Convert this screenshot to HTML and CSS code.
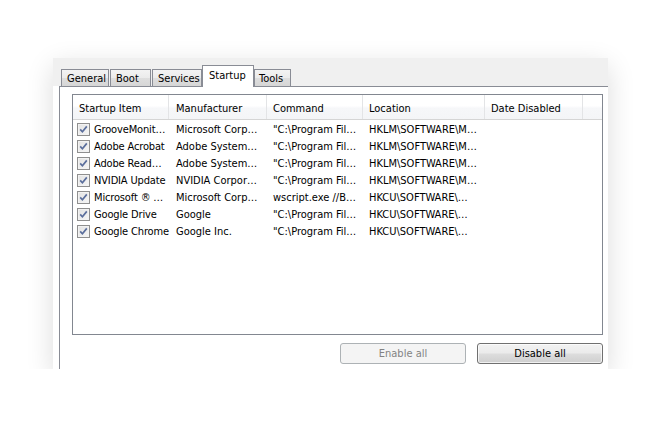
FILE: index.html
```html
<!DOCTYPE html>
<html>
<head>
<meta charset="utf-8">
<link rel="stylesheet" href="styles.css">
</head>
<body>
<div class="panel">
  <div class="tabs">
    <div class="tab t-general">General</div>
    <div class="tab t-boot">Boot</div>
    <div class="tab t-services">Services</div>
    <div class="tab t-startup active">Startup</div>
    <div class="tab t-tools">Tools</div>
  </div>
  <div class="page">
    <div class="list">
      <div class="head">
        <div class="hc">Startup Item</div>
        <div class="hc">Manufacturer</div>
        <div class="hc">Command</div>
        <div class="hc">Location</div>
        <div class="hc">Date Disabled</div>
        <div class="hc last"></div>
      </div>
      <div class="rows">
        <div class="row">
          <div class="c item"><svg class="cb" viewBox="0 0 13 13"><defs><linearGradient id="g1" x1="0" y1="0" x2="1" y2="1"><stop offset="0" stop-color="#e4e4e4"/><stop offset="1" stop-color="#f4f4f4"/></linearGradient></defs><rect x="0.5" y="0.5" width="12" height="12" fill="#f2f2f2" stroke="#8f8f8f"/><rect x="2" y="2" width="9" height="9" fill="url(#g1)"/><path d="M3.2 6.4 L5.4 8.8 L9.8 3.4" fill="none" stroke="#5a6e9c" stroke-width="1.7"/></svg><span>GrooveMonit…</span></div>
          <div class="c">Microsoft Corp…</div>
          <div class="c">"C:\Program Fil…</div>
          <div class="c">HKLM\SOFTWARE\M…</div>
          <div class="c"></div>
        </div>
        <div class="row">
          <div class="c item"><svg class="cb" viewBox="0 0 13 13"><rect x="0.5" y="0.5" width="12" height="12" fill="#f2f2f2" stroke="#8f8f8f"/><rect x="2" y="2" width="9" height="9" fill="url(#g1)"/><path d="M3.2 6.4 L5.4 8.8 L9.8 3.4" fill="none" stroke="#5a6e9c" stroke-width="1.7"/></svg><span>Adobe Acrobat</span></div>
          <div class="c">Adobe System…</div>
          <div class="c">"C:\Program Fil…</div>
          <div class="c">HKLM\SOFTWARE\M…</div>
          <div class="c"></div>
        </div>
        <div class="row">
          <div class="c item"><svg class="cb" viewBox="0 0 13 13"><rect x="0.5" y="0.5" width="12" height="12" fill="#f2f2f2" stroke="#8f8f8f"/><rect x="2" y="2" width="9" height="9" fill="url(#g1)"/><path d="M3.2 6.4 L5.4 8.8 L9.8 3.4" fill="none" stroke="#5a6e9c" stroke-width="1.7"/></svg><span>Adobe Read…</span></div>
          <div class="c">Adobe System…</div>
          <div class="c">"C:\Program Fil…</div>
          <div class="c">HKLM\SOFTWARE\M…</div>
          <div class="c"></div>
        </div>
        <div class="row">
          <div class="c item"><svg class="cb" viewBox="0 0 13 13"><rect x="0.5" y="0.5" width="12" height="12" fill="#f2f2f2" stroke="#8f8f8f"/><rect x="2" y="2" width="9" height="9" fill="url(#g1)"/><path d="M3.2 6.4 L5.4 8.8 L9.8 3.4" fill="none" stroke="#5a6e9c" stroke-width="1.7"/></svg><span>NVIDIA Update</span></div>
          <div class="c">NVIDIA Corpor…</div>
          <div class="c">"C:\Program Fil…</div>
          <div class="c">HKLM\SOFTWARE\M…</div>
          <div class="c"></div>
        </div>
        <div class="row">
          <div class="c item"><svg class="cb" viewBox="0 0 13 13"><rect x="0.5" y="0.5" width="12" height="12" fill="#f2f2f2" stroke="#8f8f8f"/><rect x="2" y="2" width="9" height="9" fill="url(#g1)"/><path d="M3.2 6.4 L5.4 8.8 L9.8 3.4" fill="none" stroke="#5a6e9c" stroke-width="1.7"/></svg><span>Microsoft ® …</span></div>
          <div class="c">Microsoft Corp…</div>
          <div class="c">wscript.exe //B…</div>
          <div class="c">HKCU\SOFTWARE\…</div>
          <div class="c"></div>
        </div>
        <div class="row">
          <div class="c item"><svg class="cb" viewBox="0 0 13 13"><rect x="0.5" y="0.5" width="12" height="12" fill="#f2f2f2" stroke="#8f8f8f"/><rect x="2" y="2" width="9" height="9" fill="url(#g1)"/><path d="M3.2 6.4 L5.4 8.8 L9.8 3.4" fill="none" stroke="#5a6e9c" stroke-width="1.7"/></svg><span>Google Drive</span></div>
          <div class="c">Google</div>
          <div class="c">"C:\Program Fil…</div>
          <div class="c">HKCU\SOFTWARE\…</div>
          <div class="c"></div>
        </div>
        <div class="row">
          <div class="c item"><svg class="cb" viewBox="0 0 13 13"><rect x="0.5" y="0.5" width="12" height="12" fill="#f2f2f2" stroke="#8f8f8f"/><rect x="2" y="2" width="9" height="9" fill="url(#g1)"/><path d="M3.2 6.4 L5.4 8.8 L9.8 3.4" fill="none" stroke="#5a6e9c" stroke-width="1.7"/></svg><span>Google Chrome</span></div>
          <div class="c">Google Inc.</div>
          <div class="c">"C:\Program Fil…</div>
          <div class="c">HKCU\SOFTWARE\…</div>
          <div class="c"></div>
        </div>
      </div>
    </div>
    <div class="buttons">
      <div class="btn disabled">Enable all</div>
      <div class="btn">Disable all</div>
    </div>
  </div>
</div>
</body>
</html>
```
FILE: styles.css
```css
html, body {
  margin: 0;
  padding: 0;
  background: #ffffff;
}
body {
  font-family: "DejaVu Sans Condensed", "DejaVu Sans", "Liberation Sans", sans-serif;
  font-stretch: condensed;
  font-size: 11px;
  color: #000;
  padding-top: 58px;
  padding-left: 53px;
}
.panel {
  width: 555px;
  height: 311px;
  background: #ffffff;
  box-shadow: 0 8px 26px rgba(0, 0, 0, 0.14);
  overflow: hidden;
  display: flex;
  flex-direction: column;
}
.tabs {
  background: #f0f0f0;
  padding: 7px 0 0 8px;
  height: 21px;
  display: flex;
  align-items: flex-end;
  gap: 1px;
}
.tab {
  box-sizing: border-box;
  height: 17px;
  border: 1px solid #898c95;
  border-bottom: none;
  background: linear-gradient(#f3f3f3 0%, #ebebeb 50%, #dedede 51%, #d6d6d6 100%);
  display: flex;
  align-items: center;
  padding-left: 5px;
  line-height: 1;
}
.t-general { width: 48px; }
.t-boot { width: 41px; }
.t-services { width: 50px; }
.t-startup { width: 52px; margin-left: -1px; margin-right: -1px; }
.t-tools { width: 37px; padding-left: 4px; }
.tab.active {
  height: 22px;
  background: #ffffff;
  margin-bottom: -1px;
  position: relative;
  z-index: 1;
  padding-left: 6px;
  padding-bottom: 2px;
}
.page {
  flex: 1;
  margin-left: 6px;
  border-top: 1px solid #898c95;
  border-left: 1px solid #898c95;
  background: #ffffff;
  padding: 7px 0 0 12px;
}
.list {
  box-sizing: border-box;
  width: 531px;
  height: 241px;
  border: 1px solid #828790;
  background: #ffffff;
}
.head {
  display: grid;
  grid-template-columns: 96px 98px 96px 122px 98px 1fr;
  height: 24px;
  border-bottom: 1px solid #d5d5d5;
  background: linear-gradient(#ffffff 0%, #ffffff 45%, #f6f7f9 55%, #f4f5f7 100%);
}
.hc {
  border-right: 1px solid #e3e4e6;
  display: flex;
  align-items: center;
  padding-left: 6px;
  padding-top: 2px;
  white-space: nowrap;
}
.hc:nth-child(2) { padding-left: 7px; }
.hc.last { border-right: none; }
.rows {
  padding-top: 1px;
}
.row {
  display: grid;
  grid-template-columns: 96px 98px 96px 122px 98px 1fr;
  height: 17px;
}
.c {
  display: flex;
  align-items: center;
  padding-left: 6px;
  white-space: nowrap;
  overflow: hidden;
}
.row .c:nth-child(2) { padding-left: 7px; }
.c.item {
  padding-left: 4px;
  overflow: visible;
  letter-spacing: -0.15px;
}
.cb {
  width: 13px;
  height: 13px;
  margin-right: 4px;
  flex: none;
}
.buttons {
  width: 531px;
  margin-top: 8px;
  display: flex;
  justify-content: flex-end;
  gap: 11px;
}
.btn {
  box-sizing: border-box;
  width: 126px;
  height: 21px;
  border: 1px solid #707070;
  border-radius: 3px;
  background: linear-gradient(#f2f2f2 0%, #ebebeb 48%, #dddddd 52%, #cfcfcf 100%);
  box-shadow: inset 0 0 0 1px rgba(255, 255, 255, 0.7);
  display: flex;
  align-items: center;
  justify-content: center;
  color: #000;
}
.btn.disabled {
  border-color: #adb2b5;
  background: #f4f4f4;
  box-shadow: none;
  color: #838383;
}
```
